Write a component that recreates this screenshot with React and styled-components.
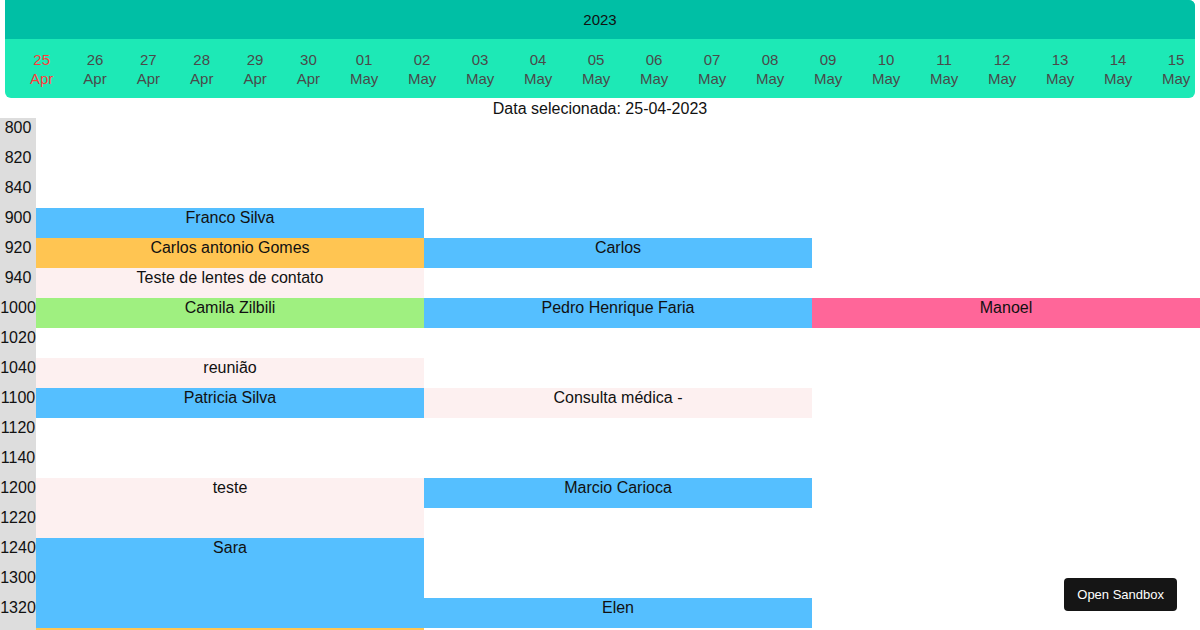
import React from "react";
import styled, { createGlobalStyle } from "styled-components";

const Global = createGlobalStyle`
  html, body { margin: 0; padding: 0; overflow: hidden; background: #fff; }
  body { font-family: "Liberation Sans", Arial, sans-serif; color: #111; }
  ::-webkit-scrollbar { display: none; }
`;

const Page = styled.div`
  width: 1200px;
`;

const Picker = styled.div`
  margin: 0 5px;
  border-radius: 0 6px 6px 6px;
  overflow: hidden;
  background: #1de9b6;
`;

const YearBar = styled.div`
  height: 39px;
  background: #00bfa5;
  display: flex;
  align-items: center;
  justify-content: center;
  font-size: 15px;
  color: #111;
`;

const Strip = styled.div`
  display: flex;
  padding: 11px 0 10px 10px;
  overflow: hidden;
  white-space: nowrap;
`;

const Day = styled.div`
  flex: none;
  padding: 0 ${(p) => (p.$narrow ? "14.83px" : "15px")};
  text-align: center;
  font-size: 15px;
  line-height: 19px;
  color: ${(p) => (p.$active ? "#ff3b3b" : "#4a4a4a")};
`;

const Selected = styled.div`
  box-sizing: border-box;
  text-align: center;
  font-size: 16px;
  line-height: 20px;
  height: 20px;
  padding-top: 1px;
  color: #111;
`;

const Grid = styled.div`
  display: grid;
  grid-template-columns: 36px repeat(3, 1fr);
  grid-auto-rows: 30px;
`;

const TimeCell = styled.div`
  box-sizing: border-box;
  padding-top: 1px;
  background: #ddd;
  text-align: center;
  font-size: 16px;
  line-height: 18px;
  color: #111;
`;

const EventCell = styled.div`
  box-sizing: border-box;
  padding-top: 1px;
  background: ${(p) => p.$bg || "transparent"};
  text-align: center;
  font-size: 16px;
  line-height: 18px;
  color: #111;
`;

const SandboxButton = styled.button`
  position: fixed;
  right: 23px;
  bottom: 19px;
  height: 33px;
  padding: 0 13px;
  border: none;
  border-radius: 4px;
  background: #151515;
  color: #fff;
  font-family: "Liberation Sans", Arial, sans-serif;
  font-size: 13px;
`;

const C = {
  blue: "#55bfff",
  orange: "#ffc552",
  pale: "#fdf0f0",
  green: "#9ff080",
  pink: "#ff6699",
};

const dates = [];
for (let d = 25; d <= 30; d++) dates.push([String(d), "Apr"]);
for (let d = 1; d <= 31; d++) dates.push([String(d).padStart(2, "0"), "May"]);

const rows = [
  ["800", []],
  ["820", []],
  ["840", []],
  ["900", [[C.blue, "Franco Silva"]]],
  ["920", [[C.orange, "Carlos antonio Gomes"], [C.blue, "Carlos"]]],
  ["940", [[C.pale, "Teste de lentes de contato"]]],
  ["1000", [[C.green, "Camila Zilbili"], [C.blue, "Pedro Henrique Faria"], [C.pink, "Manoel"]]],
  ["1020", []],
  ["1040", [[C.pale, "reunião"]]],
  ["1100", [[C.blue, "Patricia Silva"], [C.pale, "Consulta médica -"]]],
  ["1120", []],
  ["1140", []],
  ["1200", [[C.pale, "teste"], [C.blue, "Marcio Carioca"]]],
  ["1220", [[C.pale, ""]]],
  ["1240", [[C.blue, "Sara"]]],
  ["1300", [[C.blue, ""]]],
  ["1320", [[C.blue, ""], [C.blue, "Elen"]]],
  ["1340", [[C.orange, ""]]],
];

export default function App() {
  return (
    <Page>
      <Global />
      <Picker>
        <YearBar>2023</YearBar>
        <Strip>
          {dates.map(([d, m], i) => (
            <Day key={i} $active={i === 0} $narrow={m === "May"}>
              <div>{d}</div>
              <div>{m}</div>
            </Day>
          ))}
        </Strip>
      </Picker>
      <Selected>Data selecionada: 25-04-2023</Selected>
      <Grid>
        {rows.map(([t, evs]) => (
          <React.Fragment key={t}>
            <TimeCell>{t}</TimeCell>
            {[0, 1, 2].map((c) => (
              <EventCell key={c} $bg={evs[c] && evs[c][0]}>
                {evs[c] ? evs[c][1] : ""}
              </EventCell>
            ))}
          </React.Fragment>
        ))}
      </Grid>
      <SandboxButton>Open Sandbox</SandboxButton>
    </Page>
  );
}
